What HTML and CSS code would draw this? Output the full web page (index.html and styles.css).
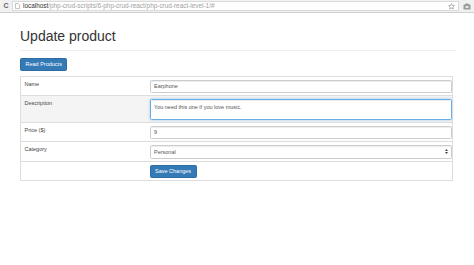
FILE: index.html
```html
<!DOCTYPE html>
<html lang="en">
<head>
<meta charset="utf-8">
<title>Update product</title>
<link rel="stylesheet" href="styles.css">
</head>
<body>
<div class="chrome">
  <span class="reload">C</span>
  <div class="url">
    <svg class="page-ic" width="5" height="6" viewBox="0 0 5 6"><path d="M0.5 0.5h2.6l1.4 1.4v3.6h-4z" fill="#fff" stroke="#999" stroke-width="0.6"/></svg>
    <span class="host">localhost</span><span class="path">/php-crud-scripts/6-php-crud-react/php-crud-react-level-1/#</span>
    <svg class="star" width="7" height="7" viewBox="0 0 10 10"><path d="M5 0.8l1.2 2.7 2.9.3-2.2 1.9.7 2.9L5 7.1 2.4 8.6l.7-2.9L.9 3.8l2.9-.3z" fill="none" stroke="#8a8a8a" stroke-width="0.9"/></svg>
  </div>
  <svg class="ext" width="8" height="7" viewBox="0 0 8 7"><rect x="0.5" y="1.5" width="7" height="5" rx="0.6" fill="#9a9a9a"/><rect x="2.5" y="0.5" width="3" height="1.5" fill="#9a9a9a"/><rect x="2.5" y="3" width="3" height="2" fill="#e8e8e8"/></svg>
</div>
<div class="page">
  <h1 class="title">Update product</h1>
  <hr class="rule">
  <button class="btn">Read Products</button>
  <table class="form-table">
    <colgroup><col class="c1"><col></colgroup>
    <tr>
      <td class="lbl">Name</td>
      <td><input class="field" type="text" value="Earphone"></td>
    </tr>
    <tr class="shade">
      <td class="lbl">Description</td>
      <td><textarea class="field area">You need this one if you love music.</textarea></td>
    </tr>
    <tr>
      <td class="lbl">Price ($)</td>
      <td><input class="field" type="text" value="9"></td>
    </tr>
    <tr>
      <td class="lbl">Category</td>
      <td>
        <div class="select-wrap">
          <div class="field sel">Personal</div>
          <svg class="arrow" width="3" height="5" viewBox="0 0 3 5"><path d="M1.5 0L3 2H0z M1.5 5L3 3H0z" fill="#444"/></svg>
        </div>
      </td>
    </tr>
    <tr>
      <td></td>
      <td><button class="btn">Save Changes</button></td>
    </tr>
  </table>
</div>
</body>
</html>
```
FILE: styles.css
```css
html, body {
  margin: 0;
  background: #fff;
}
body {
  font-family: "Liberation Sans", Arial, sans-serif;
  color: #333;
}
.chrome {
  height: 12px;
  background: #f1f1f1;
  border-bottom: 1px solid #cfcfcf;
  display: flex;
  align-items: center;
}
.reload {
  width: 12px;
  text-align: center;
  font-size: 7px;
  font-weight: bold;
  color: #666;
  line-height: 12px;
}
.url {
  width: 447px;
  height: 10px;
  box-sizing: border-box;
  background: #fff;
  border: 1px solid #dadada;
  display: flex;
  align-items: center;
  font-size: 6.4px;
  line-height: 8px;
  color: #a0a0a0;
  padding-left: 2px;
}
.page-ic {
  margin-right: 3px;
}
.host {
  color: #303030;
}
.star {
  margin-left: auto;
  margin-right: 3px;
}
.ext {
  margin-left: 4px;
}
.page {
  padding: 0 20px;
}
.title {
  font-size: 14px;
  font-weight: 400;
  line-height: 1.1;
  margin: 15.5px 0 0;
  color: #333;
}
.rule {
  width: 436px;
  margin: 6px 0 7px;
  border: 0;
  border-top: 1px solid #eee;
}
.btn {
  display: block;
  height: 13px;
  padding: 0 4.5px;
  font-family: inherit;
  font-size: 5.5px;
  line-height: 11px;
  color: #fff;
  background: #337ab7;
  border: 1px solid #2e6da4;
  border-radius: 1.5px;
}
.form-table {
  margin-top: 5px;
  width: 433px;
  table-layout: fixed;
  border-collapse: collapse;
  border: 1px solid #ddd;
}
.c1 {
  width: 126px;
}
.form-table td {
  border-top: 1px solid #ddd;
  padding: 3px 3px 2px;
  vertical-align: top;
  font-size: 5.5px;
  line-height: 8px;
  color: #444;
}
.form-table td.lbl {
  padding-left: 3.5px;
}
.shade td {
  background: #f4f4f4;
}
.field {
  display: block;
  box-sizing: border-box;
  width: 302px;
  height: 13px;
  margin: 0;
  padding: 0 3.5px;
  font-family: inherit;
  font-size: 5.5px;
  line-height: 11px;
  color: #555;
  background: #fff;
  border: 1px solid #ccc;
  border-radius: 1.5px;
  box-shadow: inset 0 1px 1px rgba(0,0,0,.075);
}
.area {
  height: 21px;
  padding-top: 2px;
  resize: none;
  border-color: #66afe9;
  outline: 0;
  box-shadow: inset 0 1px 1px rgba(0,0,0,.075), 0 0 3px rgba(102,175,233,.6);
}
.select-wrap {
  position: relative;
  width: 302px;
}
.sel {
  height: 14px;
  line-height: 12px;
}
.arrow {
  position: absolute;
  right: 4px;
  top: 4.5px;
}
```
